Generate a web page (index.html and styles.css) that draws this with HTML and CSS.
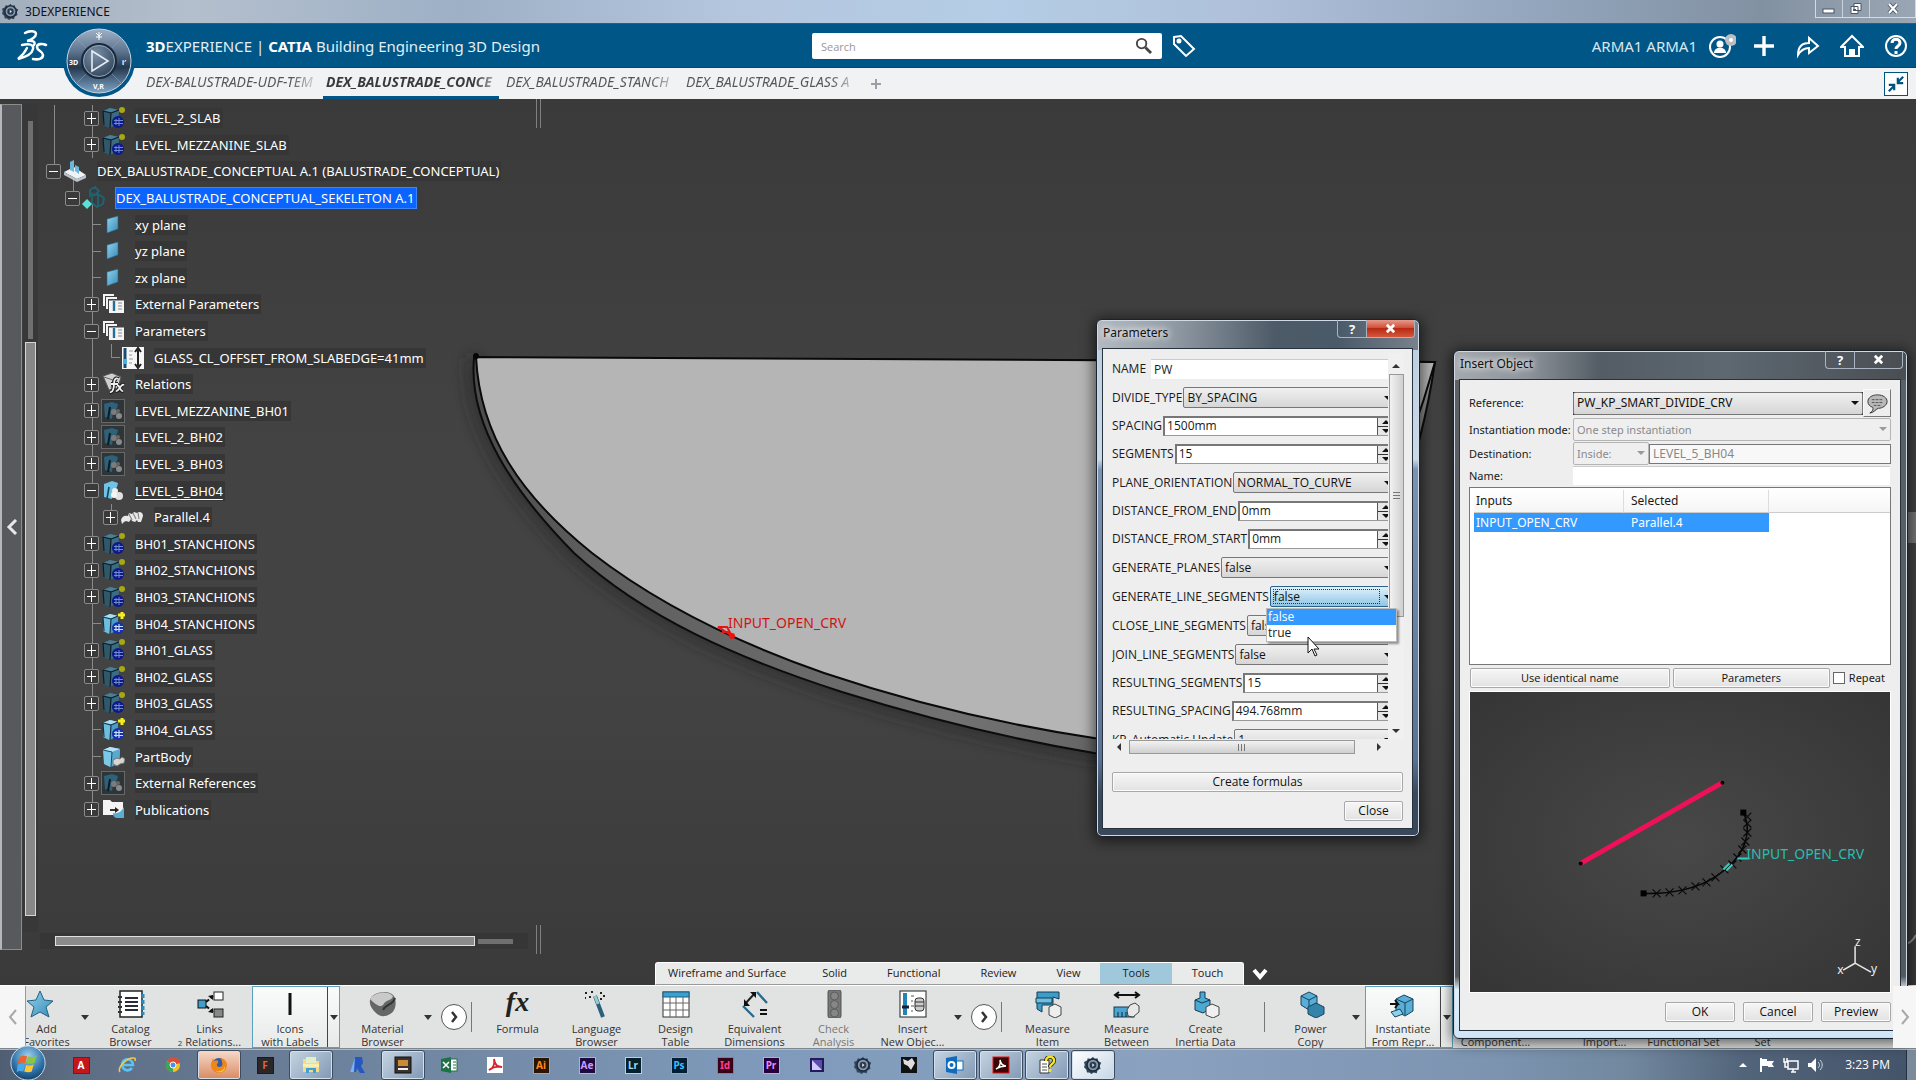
FILE: index.html
```html
<!DOCTYPE html>
<html lang="en">
<head>
<meta charset="utf-8">
<title>3DEXPERIENCE</title>
<link rel="stylesheet" href="styles.css">
</head>
<body>
<svg class="defs" aria-hidden="true">
  <defs>
    <linearGradient id="gSlabSide" x1="0" y1="0" x2="1" y2="0"><stop offset="0" stop-color="#4a4a4a"/><stop offset=".12" stop-color="#5e5e5e"/><stop offset=".5" stop-color="#727272"/><stop offset=".64" stop-color="#666"/><stop offset="1" stop-color="#8a8a8a"/></linearGradient>
    <linearGradient id="gBlue" x1="0" y1="0" x2="1" y2="1"><stop offset="0" stop-color="#8fd3f0"/><stop offset="1" stop-color="#3a8bb5"/></linearGradient>
    <linearGradient id="gRing" x1="0" y1="0" x2="0" y2="1"><stop offset="0" stop-color="#9fb0c4"/><stop offset=".35" stop-color="#5d7590"/><stop offset=".6" stop-color="#24384f"/><stop offset="1" stop-color="#7fa6c8"/></linearGradient>
    <radialGradient id="gHub" cx=".4" cy=".3" r=".9"><stop offset="0" stop-color="#7a90a8"/><stop offset="1" stop-color="#1f3045"/></radialGradient>
    <radialGradient id="gOrb" cx=".5" cy=".3" r=".8"><stop offset="0" stop-color="#9fd0ee"/><stop offset=".6" stop-color="#2a6ea5"/><stop offset="1" stop-color="#0c2c50"/></radialGradient>
  </defs>
  <symbol id="i-body" viewBox="0 0 24 24">
    <path d="M2 5 9 2l8 2-1 14-8 4-6-3z" fill="#6cbde0"/><path d="M2 5 9 2l8 2-7 3z" fill="#a8def5"/><path d="M10 7l7-3-1 14-7 4z" fill="#4a9cc4"/>
    <path d="M2 5l8 2-1 15M10 7l7-3M2 5l1 14" fill="none" stroke="#123448" stroke-width="1.2"/>
    <circle cx="17" cy="16" r="6" fill="#1a2fae"/><path d="M15 13v6M18 12v8M13 14.500h9M13 17.500h9" stroke="#bfe0ff" stroke-width="1.200"/><path d="M21 0v7M17 3h7" stroke="#f5ec22" stroke-width="3"/>
  </symbol>
  <symbol id="i-body-dim" viewBox="0 0 24 24">
    <path d="M2 5 9 2l9 2-1 14-9 4-6-3z" fill="#30586b"/><path d="M2 5 9 2l9 2-8 3z" fill="#4b7f95"/><path d="M10 7l8-3-1 14-8 4z" fill="#3b6c82"/>
    <path d="M2 5l8 2-1 15M10 7l8-3M2 5l1 14" fill="none" stroke="#0c1d27" stroke-width="1.2"/>
    <circle cx="17" cy="16" r="6" fill="#10188a"/><path d="M15 13v6M18 12v8M13 14.500h9M13 17.500h9" stroke="#6b8cd0" stroke-width="1"/><circle cx="21" cy="4" r="3" fill="#a8a714"/>
  </symbol>
  <symbol id="i-partbody" viewBox="0 0 24 24">
    <path d="M2 5 9 2l10 2-1 14-9 4-6-3z" fill="#7cc8e8"/><path d="M2 5 9 2l10 2-8 3z" fill="#b4e4f8"/><path d="M11 7l8-3-1 14-8 4z" fill="#57a9cf"/><path d="M2 5l9 2-1 15" fill="none" stroke="#1d4a60"/>
    <path d="M12 15l4-2 3 1 2-2 3 2-1 4-4 1-3 2-4-2z" fill="#d9d6d2" stroke="#777"/>
  </symbol>
  <symbol id="i-plane" viewBox="0 0 24 24"><path d="M6 6 17 3v13L6 20z" fill="url(#gBlue)" stroke="#25617f" stroke-width=".6"/></symbol>
  <symbol id="i-params" viewBox="0 0 24 24">
    <path d="M2 2h11v2H4v10H2zM5 5h11v2H7v10H5z" fill="#f4f4f4"/><path d="M8 8h15v13H8z" fill="#f4f4f4"/><path d="M13 9v10" stroke="#1f6f9f" stroke-width="2.4"/><path d="M17 11h4M17 14h4M17 17h4" stroke="#888"/><path d="M8 8h15" stroke="#444"/>
  </symbol>
  <symbol id="i-param" viewBox="0 0 24 24"><rect x="2" y="1" width="22" height="22" fill="#f7f7f7"/><path d="M5 2v20" stroke="#1b4d73" stroke-width="3"/><path d="M5 13v5" stroke="#49b3e0" stroke-width="4"/><path d="M9 5h4M9 9h3M9 13h4M9 17h3" stroke="#999"/><path d="M18 4v16M15 6l3-4 3 4M15 18l3 4 3-4" fill="none" stroke="#222" stroke-width="2"/></symbol>
  <symbol id="i-rel" viewBox="0 0 24 24"><path d="M2 4l9-3 9 4-3 11-9 2z" fill="#cfcfcf" stroke="#555"/><path d="M3 5l9 3 7-3M12 8l-2 8" stroke="#666" fill="none"/><path d="M17 7c-3-2-4 2-4 5s-1 9-4 8M10 12h7M15 19c3 1 5-8 8-6M16 13c3 0 3 7 6 6" fill="none" stroke="#222" stroke-width="4"/><path d="M17 7c-3-2-4 2-4 5s-1 9-4 8M10 12h7M15 19c3 1 5-8 8-6M16 13c3 0 3 7 6 6" fill="none" stroke="#eee" stroke-width="1.800"/></symbol>
  <symbol id="i-set-dim" viewBox="0 0 24 24"><rect x=".5" y=".5" width="23" height="23" fill="#2e3539" stroke="#686868"/><path d="M3 5l8-2 6 2-1 4-4 4-1 7-7-2z" fill="#2f6178"/><path d="M9 8l-2 12" stroke="#101a20" stroke-width="2"/><circle cx="13" cy="13" r="3" fill="#7c7c7c"/><circle cx="18" cy="17" r="3" fill="#8a8a8a"/><circle cx="17" cy="12" r="2" fill="#666"/></symbol>
  <symbol id="i-set" viewBox="0 0 24 24"><path d="M3 5l8-3 6 2-1 4-4 4-1 8-8-2z" fill="#6fc4e6"/><path d="M8 8L6 20" stroke="#1a4459" stroke-width="1.6"/><circle cx="14" cy="12" r="3" fill="#eee"/><circle cx="18" cy="17" r="4" fill="#e2e2e2"/><circle cx="13" cy="16" r="3" fill="#f5f5f5"/></symbol>
  <symbol id="i-parallel" viewBox="0 0 24 24"><path d="M1 15c1-4 4-5 7-4l1-3 3 1 2-2 3 1 2-1c3 0 4 2 4 4l-2 6-3 0-1-2-2 2-3-1-1-2-2 3-3-1-2 1-2 2z" fill="#e8e8e8"/><path d="M9 9l3 6M13 8l3 6M18 8l1 6" stroke="#888" stroke-width="1.2"/></symbol>
  <symbol id="i-pub" viewBox="0 0 24 24"><path d="M2 2h7l2 2h11v13H2z" fill="#f4f4f4"/><path d="M9 12h7" stroke="#333" stroke-width="2"/><path d="M23 9v11h-7c-3 0-4-3-4-5 5 1 8-1 11-6z" fill="#5aaed4"/><path d="M14 9l4 3-4 3" fill="#222"/></symbol>
  <symbol id="i-product" viewBox="0 0 24 24"><path d="M1 13l13 7 9-4-12-8z" fill="#eef3f6"/><path d="M1 13v3l13 7v-3zM14 20v3l9-4v-3z" fill="#b8c2c8"/><path d="M7 3l4-2v12l-4-2zM12 6l4 2v7l-4-3z" fill="#6ab8dc"/></symbol>
  <symbol id="i-skel" viewBox="0 0 24 24"><g fill="none" stroke="#1f6474" stroke-width="1.8"><path d="M8 4l5-3 4 4-4 4-5-2zM10 10l6-2 6 4-1 6-6 3-5-4z"/><path d="M8 4v7M16 8v12"/></g><path d="M0 18l5-5 5 5-5 5z" fill="#5ce0d8"/></symbol>
  <symbol id="i-compass" viewBox="0 0 24 24"><path d="M12 1l2 3 4-1 1 4 4 2-2 4 1 4-4 2-1 4-4-1-3 2-3-2-3 0-1-4-3-3 1-3-1-4 4-2 1-3 4 1z" fill="#33455a"/><circle cx="12" cy="12" r="8" fill="#8598ac" stroke="#1c2937" stroke-width="2"/><circle cx="12" cy="12" r="4.500" fill="#2b3c50"/><path d="M11 9.500l3 2.500-3 2.500z" fill="#dbe6f0"/></symbol>
</svg>

<div class="titlebar">
  <svg class="app-icon"><use href="#i-compass"/></svg>
  <span class="title">3DEXPERIENCE</span>
  <div class="win-controls">
    <button aria-label="Minimize"><svg viewBox="0 0 14 14"><rect x="1" y="7" width="11" height="4" fill="#fff" stroke="#4a5665"/></svg></button>
    <button aria-label="Restore"><svg viewBox="0 0 14 14"><path d="M5 1.500h7v7H5z M2 4.500h7v7H2z" fill="#fff" stroke="#4a5665"/><rect x="4" y="7" width="3" height="2" fill="#4a5665"/></svg></button>
    <button class="wide" aria-label="Close window"><svg viewBox="0 0 14 14"><path d="M3 2l8 9M11 2l-8 9" stroke="#4a5665" stroke-width="4"/><path d="M3 2l8 9M11 2l-8 9" stroke="#fff" stroke-width="2.200"/></svg></button>
  </div>
</div>

<header class="topbar">
  <div class="brand">
    <svg class="logo" viewBox="0 0 32 32" fill="none" stroke="#fff" stroke-linecap="round"><path d="M9 3c5-3 11-2 11 1 0 3-5 6-9 7 6-1 9 1 7 4" stroke-width="2.400"/><path d="M6 15c8-2 12 0 11 4-1 5-7 8-15 10 4-3 7-7 9-11" stroke-width="2.400"/><path d="M30 15c-4-2-9-1-9 2 0 4 6 4 6 8 0 4-5 5-10 4" stroke-width="2.600"/></svg>
    <h1><b>3D</b>EXPERIENCE | <b>CATIA</b> Building Engineering 3D Design</h1>
  </div>
  <div class="search"><input type="text" placeholder="Search" aria-label="Search"><button aria-label="Run search"><svg viewBox="0 0 18 18" fill="none" stroke="#444"><circle cx="7" cy="7" r="5" stroke-width="2"/><path d="M11 11l6 6" stroke-width="3"/></svg></button></div>
  <div class="top-right">
    <button class="tag" aria-label="Tags"><svg viewBox="0 0 24 24" fill="none" stroke="#fff" stroke-width="2"><path d="M2 3l7-1 13 13-8 7L2 10z"/><circle cx="7" cy="7" r="1.500" fill="#fff"/></svg></button>
    <span class="user">ARMA1 ARMA1</span>
    <button aria-label="Profile"><svg viewBox="0 0 28 24"><circle cx="12" cy="13" r="10" fill="none" stroke="#fff" stroke-width="2"/><circle cx="12" cy="10" r="3.500" fill="#fff"/><path d="M6 19c0-7 12-7 12 0z" fill="#fff"/><circle cx="23" cy="6" r="6" fill="#b9bec6"/><circle cx="23" cy="6" r="2" fill="#fff"/></svg></button>
    <button aria-label="Add"><svg viewBox="0 0 24 24"><path d="M12 2v20M2 12h20" stroke="#fff" stroke-width="3.400"/></svg></button>
    <button aria-label="Share"><svg viewBox="0 0 24 24" fill="none" stroke="#fff" stroke-width="2"><path d="M2 21c0-8 3-12 11-12V4l9 8-9 7v-5c-5 0-8 2-11 7z"/></svg></button>
    <button aria-label="Home"><svg viewBox="0 0 24 24" fill="none" stroke="#fff" stroke-width="2"><path d="M1 13L12 2l11 11h-4v9H5v-9z"/><rect x="9" y="15" width="6" height="7" fill="#fff" stroke="none"/></svg></button>
    <button aria-label="Help"><svg viewBox="0 0 24 24" fill="none" stroke="#fff" stroke-width="2"><circle cx="12" cy="12" r="10"/><path d="M8 9c0-5 8-5 8 0 0 3-4 3-4 6" stroke-width="3"/><path d="M12 17v3" stroke-width="3"/></svg></button>
  </div>
  <svg class="compass" viewBox="0 0 74 74">
    <circle cx="37" cy="37" r="36" fill="#005686"/><circle cx="37" cy="37" r="32" fill="url(#gRing)" stroke="#c5d3e0" stroke-width="1"/>
    <path d="M14 14l10 10M60 14L50 24M14 60l10-10M60 60L50 50" stroke="#8ba0b6" stroke-width="1" opacity=".6"/>
    <circle cx="37" cy="37" r="17" fill="url(#gHub)" stroke="#1a2a3c" stroke-width="2"/><circle cx="37" cy="37" r="15.500" fill="none" stroke="#8fa5bb"/>
    <path d="M30 27l16 10-16 10z" fill="none" stroke="#e6eef5" stroke-width="1.600"/>
    <path d="M34 9l3 3 3-3M37 8v8M34 13h6" stroke="#fff" fill="none"/>
    <text x="7" y="41">3D</text><text x="60" y="41">i&#8242;</text><text x="31" y="65">V,R</text>
  </svg>
</header>

<nav class="doc-tabs">
  <a href="#">DEX-BALUSTRADE-UDF-TEM</a>
  <a href="#" class="active">DEX_BALUSTRADE_CONCE</a>
  <a href="#">DEX_BALUSTRADE_STANCH</a>
  <a href="#">DEX_BALUSTRADE_GLASS A</a>
  <button class="new-tab" aria-label="New tab"><svg viewBox="0 0 12 12"><path d="M6 1v10M1 6h10" stroke="#9aa0a5" stroke-width="2"/></svg></button>
  <button class="shrink" aria-label="Exit full screen"><svg viewBox="0 0 20 20" stroke="#00527f" stroke-width="2.400" fill="none"><path d="M18 2l-6 6M12 3v6h6M2 18l6-6M8 17v-6H2"/></svg></button>
</nav>

<main class="viewport">
  <svg class="scene" viewBox="0 99 1916 886" preserveAspectRatio="xMinYMin slice">
    <filter id="soft" x="-10%" y="-10%" width="120%" height="120%"><feGaussianBlur stdDeviation="8"/></filter>
    <path d="M474 358C468 425 514 492 574 553 645 618 737 658 842 692 925 718 1010 739 1094 753L1250 765" fill="none" stroke="#282828" stroke-width="9" filter="url(#soft)"/>
    <path d="M474 358C468 425 514 492 574 553 645 618 737 658 842 692 925 718 1010 739 1094 753 1260 770 1400 600 1435 362z" fill="url(#gSlabSide)" stroke="#0c0c0c" stroke-width="2"/>
    <path d="M476 357C480 436 521 496 592 553 655 602 735 642 824 673 910 702 1000 724 1094 738 1260 750 1380 560 1435 362z" fill="#b5b5b5" stroke="#0a0a0a" stroke-width="2"/>
    <circle cx="476" cy="356" r="3" fill="#050505"/>
    <path d="M718 627h9l5 9-12-8zM722 632h8" fill="none" stroke="#e81414" stroke-width="2"/><circle cx="732" cy="636" r="3" fill="#f01010"/>
    <text x="728" y="628" class="crv-label">INPUT_OPEN_CRV</text>
    <path d="M536.500 99v29M540.500 99v29M536.500 925v29M540.500 925v29" stroke="#808080"/>
    <path d="M1905 512h11v31h-11z" fill="#777"/><path d="M1903 945c6-1 10-4 13-10" stroke="#8c8c8c" stroke-width="2" fill="none"/>
  </svg>
  <div class="side-panel"><button aria-label="Collapse panel"><svg viewBox="0 0 12 16"><path d="M10 1L3 8l7 7" fill="none" stroke="#e8e8e8" stroke-width="3"/></svg></button></div>
  <div class="v-scroll"><i class="rail"></i><i class="thumb"></i></div>
  <ul class="tree">
    <li class="l3 root"><span class="box plus"></span><svg><use href="#i-body-dim"/></svg><span class="name">LEVEL_2_SLAB</span></li>
    <li class="l3 root"><span class="box plus"></span><svg><use href="#i-body-dim"/></svg><span class="name">LEVEL_MEZZANINE_SLAB</span></li>
    <li class="l1"><span class="box"></span><svg><use href="#i-product"/></svg><span class="name">DEX_BALUSTRADE_CONCEPTUAL A.1 (BALUSTRADE_CONCEPTUAL)</span></li>
    <li class="l2"><span class="box"></span><svg><use href="#i-skel"/></svg><span class="name selected">DEX_BALUSTRADE_CONCEPTUAL_SEKELETON A.1</span></li>
    <li class="l3"><span class="leaf"></span><svg><use href="#i-plane"/></svg><span class="name">xy plane</span></li>
    <li class="l3"><span class="leaf"></span><svg><use href="#i-plane"/></svg><span class="name">yz plane</span></li>
    <li class="l3"><span class="leaf"></span><svg><use href="#i-plane"/></svg><span class="name">zx plane</span></li>
    <li class="l3"><span class="box plus"></span><svg><use href="#i-params"/></svg><span class="name">External Parameters</span></li>
    <li class="l3"><span class="box"></span><svg><use href="#i-params"/></svg><span class="name">Parameters</span></li>
    <li class="l4"><span class="leaf"></span><svg><use href="#i-param"/></svg><span class="name">GLASS_CL_OFFSET_FROM_SLABEDGE=41mm</span></li>
    <li class="l3"><span class="box plus"></span><svg><use href="#i-rel"/></svg><span class="name">Relations</span></li>
    <li class="l3"><span class="box plus"></span><svg><use href="#i-set-dim"/></svg><span class="name">LEVEL_MEZZANINE_BH01</span></li>
    <li class="l3"><span class="box plus"></span><svg><use href="#i-set-dim"/></svg><span class="name">LEVEL_2_BH02</span></li>
    <li class="l3"><span class="box plus"></span><svg><use href="#i-set-dim"/></svg><span class="name">LEVEL_3_BH03</span></li>
    <li class="l3"><span class="box"></span><svg><use href="#i-set"/></svg><span class="name current">LEVEL_5_BH04</span></li>
    <li class="l4"><span class="box plus"></span><svg><use href="#i-parallel"/></svg><span class="name">Parallel.4</span></li>
    <li class="l3"><span class="box plus"></span><svg><use href="#i-body-dim"/></svg><span class="name">BH01_STANCHIONS</span></li>
    <li class="l3"><span class="box plus"></span><svg><use href="#i-body-dim"/></svg><span class="name">BH02_STANCHIONS</span></li>
    <li class="l3"><span class="box plus"></span><svg><use href="#i-body-dim"/></svg><span class="name">BH03_STANCHIONS</span></li>
    <li class="l3"><span class="leaf"></span><svg><use href="#i-body"/></svg><span class="name">BH04_STANCHIONS</span></li>
    <li class="l3"><span class="box plus"></span><svg><use href="#i-body-dim"/></svg><span class="name">BH01_GLASS</span></li>
    <li class="l3"><span class="box plus"></span><svg><use href="#i-body-dim"/></svg><span class="name">BH02_GLASS</span></li>
    <li class="l3"><span class="box plus"></span><svg><use href="#i-body-dim"/></svg><span class="name">BH03_GLASS</span></li>
    <li class="l3"><span class="leaf"></span><svg><use href="#i-body"/></svg><span class="name">BH04_GLASS</span></li>
    <li class="l3"><span class="leaf"></span><svg><use href="#i-partbody"/></svg><span class="name">PartBody</span></li>
    <li class="l3"><span class="box plus"></span><svg><use href="#i-set-dim"/></svg><span class="name">External References</span></li>
    <li class="l3 last"><span class="box plus"></span><svg><use href="#i-pub"/></svg><span class="name">Publications</span></li>
  </ul>
  <div class="h-scroll"><i class="thumb"></i><i class="rail"></i></div>
  <nav class="ribbon-tabs">
    <div class="tab-strip">
      <button>Wireframe and Surface</button><button>Solid</button><button>Functional</button><button>Review</button><button>View</button><button class="on">Tools</button><button>Touch</button>
    </div>
    <button class="more" aria-label="More tabs"><svg viewBox="0 0 16 12"><path d="M2 2l6 7 6-7" fill="none" stroke="#fff" stroke-width="4"/></svg></button>
  </nav>
</main>

<section class="ribbon">
  <button class="edge left" aria-label="Scroll left"><svg viewBox="0 0 12 18"><path d="M9 2L3 9l6 7" fill="none" stroke="#a5a9ac" stroke-width="2"/></svg></button>
  <button class="item first"><svg viewBox="0 0 28 28"><path d="M14 1l4 9 9 1-7 6 3 10-9-5-9 5 3-10-7-6 9-1z" fill="url(#gBlue)" stroke="#22617f"/></svg><span>Add<br>Favorites</span></button>
  <button class="drop" aria-label="More favorites"></button>
  <button class="item"><svg viewBox="0 0 28 28"><rect x="3" y="1" width="22" height="26" fill="#fff" stroke="#222" stroke-width="1.500"/><path d="M8 8h13M8 12h13M8 16h13M8 20h13" stroke="#2b2b3a" stroke-width="2"/><path d="M1 7h4M1 12h4M1 17h4M1 22h4" stroke="#333" stroke-width="2"/><path d="M26 4v4M26 10v4M26 16v4M26 22v3" stroke="#2b8bc0" stroke-width="3"/></svg><span>Catalog<br>Browser</span></button>
  <button class="item"><svg viewBox="0 0 28 28"><rect x="2" y="10" width="8" height="8" fill="#3f9ecb" stroke="#111"/><rect x="18" y="2" width="9" height="8" fill="#fff" stroke="#222"/><rect x="18" y="19" width="9" height="8" fill="#888" stroke="#222"/><path d="M10 12l7-6M10 16l7 6" stroke="#111" stroke-width="2" stroke-dasharray="4 2"/><path d="M17 5v5l-5-4zM17 23v-5l-5 4z" fill="#111"/></svg><span>Links<br><small>2</small> Relations...</span></button>
  <span class="split"><button class="item"><svg viewBox="0 0 28 28"><path d="M14 3v22" stroke="#111" stroke-width="3"/></svg><span>Icons<br>with Labels</span></button><button class="drop" aria-label="Label options"></button></span>
  <button class="item"><svg viewBox="0 0 28 28"><path d="M1 10C3 2 20-1 25 6c3 6 2 15-4 18-6 4-11 2-14-1-4-4-7-8-6-13z" fill="#666"/><path d="M1 9C5 2 19 0 24 6c-1 5-7 3-10 9-3 3-8-1-13-6z" fill="#c9c9c9"/><path d="M26 8c-2 7-9 6-12 12" stroke="#333" stroke-width="2" fill="none"/></svg><span>Material<br>Browser</span></button>
  <button class="drop" aria-label="More materials"></button>
  <button class="round" aria-label="Next group"><svg viewBox="0 0 12 12"><path d="M4 1l4 5-4 5" fill="none" stroke="#333" stroke-width="2.500"/></svg></button><i class="sep"></i>
  <button class="item"><em class="fx">fx</em><span>Formula</span></button>
  <button class="item"><svg viewBox="0 0 28 28"><path d="M12 6l8 21" stroke="#2c5f7c" stroke-width="4"/><path d="M12 6l3 8" stroke="#9cc" stroke-width="3"/><path d="M2 3h2M6 7h2M2 8h1M17 3h2M20 6h2M8 2h2M17 9h2" stroke="#222" stroke-width="2"/></svg><span>Language<br>Browser</span></button>
  <button class="item"><svg viewBox="0 0 28 28"><rect x="1" y="2" width="26" height="25" fill="#fff" stroke="#333"/><rect x="1" y="2" width="26" height="5" fill="#3b9fcf" stroke="#1c5f80"/><path d="M1 13h26M1 20h26M8 7v20M14 7v20M21 7v20" stroke="#666"/></svg><span>Design<br>Table</span></button>
  <button class="item"><svg viewBox="0 0 28 28"><path d="M4 14L14 3" stroke="#222" stroke-width="2"/><path d="M16 2l10 11M2 16l11 11" stroke="#2a6a8b" stroke-width="2.400"/><path d="M3 9v7h6zM9 2h6v6z" fill="#111"/><path d="M19 20h7M19 24h7" stroke="#111" stroke-width="2"/></svg><span>Equivalent<br>Dimensions</span></button>
  <button class="item off"><svg viewBox="0 0 28 28"><rect x="8" y="0" width="13" height="28" rx="2" fill="#777" stroke="#555"/><circle cx="14.500" cy="6" r="4" fill="#868686" stroke="#5c5c5c"/><circle cx="14.500" cy="14.500" r="4" fill="#868686" stroke="#5c5c5c"/><circle cx="14.500" cy="23" r="4" fill="#868686" stroke="#5c5c5c"/></svg><span>Check<br>Analysis</span></button>
  <button class="item"><svg viewBox="0 0 28 28"><rect x="1" y="1" width="26" height="26" fill="#fff" stroke="#222"/><path d="M6 3v22" stroke="#2384b8" stroke-width="4"/><path d="M3 17h7" stroke="#123" stroke-width="3"/><path d="M12 6h3M12 11h2M12 16h3M12 21h2" stroke="#555"/><rect x="16" y="8" width="9" height="13" rx="3" fill="#ccc" stroke="#333"/><path d="M16 12h9M16 16h9" stroke="#333"/></svg><span>Insert<br>New Objec...</span></button>
  <button class="drop" aria-label="More objects"></button>
  <button class="round" aria-label="Next group"><svg viewBox="0 0 12 12"><path d="M4 1l4 5-4 5" fill="none" stroke="#333" stroke-width="2.500"/></svg></button><i class="sep"></i>
  <button class="item"><svg viewBox="0 0 28 28"><path d="M3 2h22v7l-6-2v8H8v7l-5-3z" fill="#3d9cc8" stroke="#143c50"/><path d="M2 8h16v5H2z" fill="#6ac0e4" stroke="#143c50"/><path d="M15 17l6-3 6 3v8l-6 3-6-3z" fill="#eee" stroke="#444"/></svg><span>Measure<br>Item</span></button>
  <button class="item"><svg viewBox="0 0 28 28"><path d="M3 5h22M6 2L2 5l4 3M22 2l4 3-4 3" fill="none" stroke="#111" stroke-width="2"/><rect x="1" y="17" width="20" height="10" fill="#4aa6d0" stroke="#16394d"/><path d="M5 27v-5M9 27v-5M13 27v-5" stroke="#123"/><path d="M14 20l3-5 5-2 4 3v6l-6 5-5-1z" fill="#e8e8e8" stroke="#444"/></svg><span>Measure<br>Between</span></button>
  <button class="item"><svg viewBox="0 0 28 28"><path d="M8 2h5v6l5 2v9l-7 4-8-3V10l5-2z" fill="#4ba9d4" stroke="#16394d"/><path d="M3 10l7 3 8-3" fill="none" stroke="#16394d"/><path d="M14 17l6-3 7 3v8l-6 3-7-3z" fill="#f0f0f0" stroke="#444"/></svg><span>Create<br>Inertia Data</span></button>
  <i class="sep lone"></i>
  <button class="item"><svg viewBox="0 0 28 28"><path d="M4 6l8-4 8 4v9l-8 5-8-5z" fill="#58aed6" stroke="#17435a"/><path d="M4 6l8 4 8-4M12 10v9" fill="none" stroke="#17435a"/><path d="M11 17l8-4 8 4v7l-8 4-8-4z" fill="#3583aa" stroke="#17435a"/></svg><span>Power<br>Copy</span></button>
  <button class="drop" aria-label="More copies"></button>
  <span class="split"><button class="item"><svg viewBox="0 0 28 28"><path d="M7 9l8-4 9 4v12l-8 5-9-5z" fill="#58aed6" stroke="#17435a"/><path d="M7 9l9 4 8-4M16 13v12" fill="none" stroke="#17435a"/><path d="M1 14h8l-3-4M9 14l-3 4" stroke="#111" fill="none" stroke-width="2"/><path d="M2 22l9-3 3 5-8 3z" fill="#8dd0ee" stroke="#17435a"/></svg><span>Instantiate<br>From Repr...</span></button><button class="drop" aria-label="More instantiations"></button></span>
  <button class="item under"><span>Component...</span></button>
  <button class="item under gap"><span>Import...</span></button>
  <button class="item under"><span>Functional Set</span></button>
  <button class="item under"><span>Set</span></button>
  <button class="edge right" aria-label="Scroll right"><svg viewBox="0 0 12 18"><path d="M3 2l6 7-6 7" fill="none" stroke="#a5a9ac" stroke-width="2"/></svg></button>
</section>

<footer class="taskbar">
  <button class="start" aria-label="Start"><svg viewBox="0 0 40 40"><circle cx="20" cy="20" r="18" fill="url(#gOrb)" stroke="#cfe0ee"/><path d="M11 14c3-2 5-2 8-1l-2 7c-3-1-5-1-8 1z" fill="#f0622a"/><path d="M20 13c3 1 6 1 9-1l-2 8c-3 1-6 1-9 0z" fill="#8cc63f"/><path d="M9 22c3-2 5-1 8 0l-2 7c-3-1-5-1-7 1z" fill="#4aa8e8"/><path d="M18 22c3 1 6 1 8-1l-2 8c-2 1-5 1-8 0z" fill="#fdc82f"/></svg></button>
  <button class="app" aria-label="AutoCAD"><b class="sq red">A</b></button>
  <button class="app" aria-label="Internet Explorer"><svg viewBox="0 0 18 18" fill="none"><path d="M14 12a5.500 5.500 0 1 1 1-3H5" stroke="#5cc3f5" stroke-width="2.600"/><path d="M2 16C-1 12 9 1 16 2c2 0 1 2 1 3" stroke="#f2c94c" stroke-width="1.500"/></svg></button>
  <button class="app" aria-label="Chrome"><svg viewBox="0 0 18 18"><circle cx="9" cy="9" r="7" fill="#f2c12e"/><path d="M9 9L3 5a7 7 0 0 1 13 2z" fill="#dd4b39"/><path d="M9 9v7A7 7 0 0 1 3 5z" fill="#3ba455"/><circle cx="9" cy="9" r="3" fill="#4b8df0" stroke="#fff"/></svg></button>
  <button class="app open hot" aria-label="Firefox"><svg viewBox="0 0 18 18"><circle cx="9" cy="9" r="7" fill="#2a5fae"/><path d="M9 17A8 8 0 0 1 2 5l1-3 1 3c3-2 5 0 4 2-2 1-1 4 1 4 3 0 4-2 3-5 0-2-1-3-2-4 5 1 7 4 7 7a8 8 0 0 1-8 8z" fill="#f08518"/><path d="M5 14c3 3 9 1 10-4 1 5-6 9-10 4z" fill="#fbd043"/></svg></button>
  <button class="app" aria-label="Fusion"><b class="sq dark">F</b></button>
  <button class="app open" aria-label="Explorer"><svg viewBox="0 0 18 18"><path d="M1 3h6l2 2h8v11H1z" fill="#f3dd84"/><path d="M4 1h10v6H4z" fill="#dff0c8"/><path d="M1 8h16v3H1z" fill="#fbeeb0"/><path d="M4 17v-5h10v5h-3v-3H7v3z" fill="#3f9fd8"/></svg></button>
  <button class="app" aria-label="Revit"><svg viewBox="0 0 18 18"><path d="M2 16L7 1h7l1 6-2 3 4 7h-5l-3-5-1 4z" fill="#2458c0"/><path d="M7 1l-5 15h4z" fill="#7fb0f0"/></svg></button>
  <button class="app open" aria-label="Sublime"><svg viewBox="0 0 18 18"><rect x="1" y="1" width="16" height="16" fill="#3b332b" stroke="#111"/><path d="M4 4h10v6H4z" fill="#c98a3a"/><path d="M4 13h10" stroke="#eee" stroke-width="2"/></svg></button>
  <button class="app" aria-label="Excel"><svg viewBox="0 0 18 18"><rect x="8" y="3" width="9" height="12" fill="#fff" stroke="#1e7145"/><path d="M1 3l10-2v16L1 15z" fill="#1e7145"/><path d="M3 6l6 6M9 6l-6 6" stroke="#fff" stroke-width="1.600"/><path d="M13 6h3M13 9h3M13 12h3" stroke="#1e7145"/></svg></button>
  <button class="app" aria-label="Acrobat"><svg viewBox="0 0 18 18"><rect x="1" y="1" width="16" height="16" fill="#fff"/><path d="M3 14c4-1 6-6 5-11 1 6 3 8 8 8-5-1-9 0-13 3z" fill="none" stroke="#d8232a" stroke-width="1.800"/></svg></button>
  <button class="app" aria-label="Illustrator"><b class="sq ai">Ai</b></button>
  <button class="app" aria-label="After Effects"><b class="sq ae">Ae</b></button>
  <button class="app" aria-label="Lightroom"><b class="sq lr">Lr</b></button>
  <button class="app" aria-label="Photoshop"><b class="sq ps">Ps</b></button>
  <button class="app" aria-label="InDesign"><b class="sq id">Id</b></button>
  <button class="app" aria-label="Premiere"><b class="sq pr">Pr</b></button>
  <button class="app" aria-label="Media Encoder"><svg viewBox="0 0 18 18"><rect x="2" y="2" width="14" height="14" fill="#241a56"/><path d="M4 4l10 10V4z" fill="#5a4cae"/><path d="M4 4l10 10H4z" fill="#cfc8ff"/></svg></button>
  <button class="app" aria-label="3DEXPERIENCE launcher"><svg><use href="#i-compass"/></svg></button>
  <button class="app" aria-label="Rhinoceros"><svg viewBox="0 0 18 18"><rect x="1" y="1" width="16" height="16" fill="#111"/><path d="M3 3l5 2 4-3 3 5-4 7-3-4-4-2z" fill="#ddd"/></svg></button>
  <button class="app open" aria-label="Outlook"><svg viewBox="0 0 18 18"><rect x="9" y="5" width="8" height="9" fill="#fff" stroke="#0f6cbd"/><path d="M0 2l11-2v18L0 16z" fill="#0f6cbd"/><circle cx="5.500" cy="9" r="3" fill="none" stroke="#fff" stroke-width="2"/></svg></button>
  <button class="app open" aria-label="Acrobat DC"><svg viewBox="0 0 18 18"><rect x="1" y="1" width="16" height="16" fill="#3b0606" stroke="#e11"/><path d="M4 13c3-1 5-5 4-9 1 5 3 6 6 6-4 0-7 1-10 3z" fill="none" stroke="#fff" stroke-width="1.500"/></svg></button>
  <button class="app open" aria-label="Help"><svg viewBox="0 0 18 18"><path d="M2 4h9v13H2z" fill="#fff" stroke="#333"/><path d="M4 8h5M4 11h5M4 14h5" stroke="#555"/><path d="M8 5c0-6 9-5 8 0 0 3-4 3-4 6" stroke="#111" stroke-width="4" fill="none"/><path d="M8 5c0-6 9-5 8 0 0 3-4 3-4 6M12 13v3" stroke="#f6e71d" stroke-width="2.500" fill="none"/></svg></button>
  <button class="app open lit" aria-label="3DEXPERIENCE"><svg><use href="#i-compass"/></svg></button>
  <div class="tray">
    <svg viewBox="0 0 16 16"><path d="M4 10l4-4 4 4z" fill="#fff"/></svg>
    <svg viewBox="0 0 16 16"><path d="M2 1v14" stroke="#fff" stroke-width="2"/><path d="M3 2h5v2h7l-2 3 2 3H9V9H3z" fill="#fff"/></svg>
    <svg viewBox="0 0 16 16"><path d="M5 4h10v8H5zM8 15h5M10 12v3M1 1v4h3V1M2 5v5h3" fill="none" stroke="#fff" stroke-width="1.500"/></svg>
    <svg viewBox="0 0 16 16"><path d="M1 6h3l5-5v14L4 10H1z" fill="#fff"/><path d="M11 5c2 2 2 4 0 6M13 3c3 3 3 7 0 10" fill="none" stroke="#cdd8e2"/></svg>
    <time>3:23 PM</time>
    <i class="peek"></i>
  </div>
</footer>

<section class="dialog params" aria-label="Parameters">
  <div class="dlg-title"><span>Parameters</span><div class="dlg-btns"><button aria-label="Dialog help">?</button><button class="close" aria-label="Close dialog"><svg viewBox="0 0 12 12"><path d="M2 2l8 8M10 2l-8 8" stroke="#fff" stroke-width="3"/></svg></button></div></div>
  <div class="dlg-body">
    <div class="scroll-area">
      <form class="fields">
        <div class="row"><label for="f1">NAME</label><input id="f1" class="flat" type="text" value="PW"></div>
        <div class="row"><label for="f2">DIVIDE_TYPE</label><span class="combo"><select id="f2"><option>BY_SPACING</option></select></span></div>
        <div class="row"><label for="f3">SPACING</label><span class="spin"><input id="f3" type="text" value="1500mm"><i></i></span></div>
        <div class="row"><label for="f4">SEGMENTS</label><span class="spin"><input id="f4" type="text" value="15"><i></i></span></div>
        <div class="row"><label for="f5">PLANE_ORIENTATION</label><span class="combo"><select id="f5"><option>NORMAL_TO_CURVE</option></select></span></div>
        <div class="row"><label for="f6">DISTANCE_FROM_END</label><span class="spin"><input id="f6" type="text" value="0mm"><i></i></span></div>
        <div class="row"><label for="f7">DISTANCE_FROM_START</label><span class="spin"><input id="f7" type="text" value="0mm"><i></i></span></div>
        <div class="row"><label for="f8">GENERATE_PLANES</label><span class="combo"><select id="f8"><option>false</option></select></span></div>
        <div class="row"><label for="f9">GENERATE_LINE_SEGMENTS</label><span class="combo focus"><select id="f9"><option>false</option><option>true</option></select></span></div>
        <div class="row"><label for="f10">CLOSE_LINE_SEGMENTS</label><span class="combo"><select id="f10"><option>false</option></select></span></div>
        <div class="row"><label for="f11">JOIN_LINE_SEGMENTS</label><span class="combo"><select id="f11"><option>false</option></select></span></div>
        <div class="row"><label for="f12">RESULTING_SEGMENTS</label><span class="spin"><input id="f12" type="text" value="15"><i></i></span></div>
        <div class="row"><label for="f13">RESULTING_SPACING</label><span class="spin"><input id="f13" type="text" value="494.768mm"><i></i></span></div>
        <div class="row"><label for="f14">KP_Automatic Update</label><span class="combo"><select id="f14"><option>1</option></select></span></div>
      </form>
      <div class="bar-v"><i class="up"></i><i class="knob"></i><i class="down"></i></div>
      <div class="bar-h"><i class="lt"></i><i class="knob"></i><i class="rt"></i></div>
    </div>
    <button class="btn full">Create formulas</button>
    <button class="btn end">Close</button>
  </div>
  <ul class="options"><li class="hit">false</li><li>true</li></ul>
  <svg class="cursor" viewBox="0 0 13 21"><path d="M1 1v16l4-4 3 7 2-1-3-6h5z" fill="#fff" stroke="#111"/></svg>
</section>

<section class="dialog insert" aria-label="Insert Object">
  <div class="dlg-title"><span>Insert Object</span><div class="dlg-btns"><button aria-label="Dialog help">?</button><button class="close" aria-label="Close dialog"><svg viewBox="0 0 12 12"><path d="M2 2l8 8M10 2l-8 8" stroke="#fff" stroke-width="3"/></svg></button></div></div>
  <div class="dlg-body">
    <div class="form-grid">
      <label for="r1">Reference:</label><div class="line"><span class="combo dark"><select id="r1"><option>PW_KP_SMART_DIVIDE_CRV</option></select></span><button class="note" aria-label="Comment"><svg viewBox="0 0 24 24"><path d="M12 3c6 0 10 3 10 7s-5 7-9 7c-2 0-5 5-9 5 3-2 4-4 3-6-3-1-5-3-5-6 0-4 4-7 10-7z" fill="#b9b9b9" stroke="#333"/><path d="M6 8h11M6 11h12M8 14h8" stroke="#555" stroke-dasharray="3 1"/></svg></button></div>
      <label for="r2">Instantiation mode:</label><span class="combo off"><select id="r2" disabled><option>One step instantiation</option></select></span>
      <label for="r3">Destination:</label><div class="line"><span class="combo off inside"><select id="r3" disabled><option>Inside:</option></select></span><input class="dest" type="text" value="LEVEL_5_BH04" aria-label="Destination" readonly></div>
      <label for="r4">Name:</label><input id="r4" class="flat" type="text">
    </div>
    <div class="table-box">
      <table>
        <thead><tr><th>Inputs</th><th>Selected</th><th></th></tr></thead>
        <tbody><tr><td>INPUT_OPEN_CRV</td><td>Parallel.4</td><td></td></tr></tbody>
      </table>
    </div>
    <div class="line tools"><button class="btn grow4">Use identical name</button><button class="btn grow3">Parameters</button><label class="check"><input type="checkbox">Repeat</label></div>
    <svg class="preview" viewBox="0 0 421 299" preserveAspectRatio="xMidYMid meet">
      <path d="M111 171L253 90" stroke="#ee1158" stroke-width="5"/><circle cx="111" cy="171" r="2"/><circle cx="253" cy="90" r="2"/>
      <path d="M174 201C202 202 228 196 245 185 265 172 277 156 278 138 278 130 277 126 274 120" fill="none" stroke="#050505" stroke-width="1.500"/>
      <path d="M183 197l8 8M191 197l-8 8M196 196l8 8M204 196l-8 8M209 194l8 8M217 194l-8 8M222 190l8 8M230 190l-8 8M233 186l8 8M241 186l-8 8M242 181l8 8M250 181l-8 8M251 173l8 8M259 173l-8 8M259 168l8 8M267 168l-8 8M264 161l8 8M272 161l-8 8M269 153l8 8M277 153l-8 8M272 145l8 8M280 145l-8 8M274 136l8 8M282 136l-8 8M274 127l8 8M282 127l-8 8M274 120l8 8M282 120l-8 8" stroke="#0a0a0a" stroke-width="1.200"/>
      <rect x="171" y="198" width="6" height="6"/><rect x="271" y="117" width="6" height="6"/>
      <path d="M254 177l6-6M257 178l6-6M268 166h12" stroke="#2fd0c4" stroke-width="2"/>
      <text x="277" y="167" class="teal">INPUT_OPEN_CRV</text>
      <path d="M386 254v17l-12 7M386 271l16 9" fill="none" stroke="#e8e8e8" stroke-width="1.500"/>
      <text x="386" y="254">z</text><text x="368" y="282">x</text><text x="402" y="281">y</text>
    </svg>
    <div class="line actions"><button class="btn">OK</button><button class="btn">Cancel</button><button class="btn">Preview</button></div>
  </div>
</section>
</body>
</html>
```
FILE: styles.css
```css
* { box-sizing: border-box; }
html, body { height: 100%; }
body { margin: 0; display: flex; flex-direction: column; position: relative; overflow: hidden; background: #3d3d3d; font-family: "Open Sans", "Noto Sans", sans-serif; font-size: 12px; line-height: 16px; color: #1a1a1a; }
button { font: inherit; color: inherit; border: 0; background: none; padding: 0; margin: 0; display: flex; align-items: center; justify-content: center; }
input, select { font: inherit; color: inherit; margin: 0; min-width: 0; }
ul { list-style: none; margin: 0; padding: 0; }
.defs { position: absolute; width: 0; height: 0; }

/* window title */
.titlebar { flex: none; height: 24px; display: flex; align-items: center; gap: 6px; padding-left: 2px; background: linear-gradient(90deg, #a3aebc 0, #b4bfcd 10%, #9db0c6 24%, #b4c6de 38%, #b5cde6 52%, #aebfd9 66%, #93a6bd 80%, #8291a2 92%, #9aa6b3 100%); border-bottom: 1px solid #3b5870; }
.app-icon { width: 17px; height: 17px; }
.title { font: 12px/20px "Noto Sans", sans-serif; color: #111; }
.win-controls { margin-left: auto; align-self: flex-start; display: flex; height: 18px; width: 101px; border: 1px solid #d4dbe3; border-top: 0; }
.win-controls button { width: 27px; border-right: 1px solid #c9d1da; }
.win-controls .wide { flex: 1; border: 0; }
.win-controls svg { width: 14px; height: 14px; }

/* application header */
.topbar { flex: none; height: 44px; position: relative; display: grid; grid-template-columns: 812fr 350fr 754fr; align-items: center; background: #005686; color: #fff; border-bottom: 1px solid #00476f; }
.brand { display: flex; align-items: center; padding-left: 16px; gap: 98px; }
.logo { width: 32px; height: 32px; flex: none; }
h1 { margin: 0; font: 15px/20px "Noto Sans", sans-serif; white-space: nowrap; color: #e4eef5; }
h1 b { color: #fff; }
.search { display: flex; height: 26px; background: #fff; border-radius: 2px; }
.search input { flex: 1; border: 0; background: none; padding: 2px 9px 0; outline: 0; color: #333; font-size: 11px; }
.search input::placeholder { color: #999; opacity: 1; }
.search button { width: 38px; }
.search svg { width: 17px; height: 17px; }
.top-right { display: flex; align-items: center; gap: 20px; padding: 0 8px 0 10px; }
.top-right svg { width: 24px; height: 24px; display: block; }
.top-right .tag { margin-right: auto; }
.top-right [aria-label="Profile"] { margin-left: -9px; margin-right: -4px; }
.top-right [aria-label="Profile"] svg { width: 28px; }
.user { font: 15px/20px "Noto Sans", sans-serif; color: #d8e8f2; }
.compass { position: absolute; left: 62px; top: 0; width: 74px; height: 74px; z-index: 3; }
.compass text { font: bold 7px "Noto Sans", sans-serif; fill: #fff; }

/* document tabs */
.doc-tabs { flex: none; height: 31px; display: flex; align-items: stretch; gap: 4px; padding: 0 8px 0 143px; background: #f1f2f4; }
.doc-tabs a { width: 176px; padding: 0 3px; white-space: nowrap; text-decoration: none; font: italic 14px/28px "Noto Sans", sans-serif; color: transparent; background: linear-gradient(90deg, #555 84%, #d5d5d5 98%); -webkit-background-clip: text; background-clip: text; }
.doc-tabs a.active { font-family: "Open Sans", sans-serif; font-weight: bold; color: transparent; background: linear-gradient(#005686, #005686) 0 28px / 100% 3px no-repeat, linear-gradient(90deg, #3a3a3a 86%, #bbb 99%); background-clip: border-box, text; -webkit-background-clip: border-box, text; }
.new-tab { width: 20px; margin-left: 3px; }
.new-tab svg { width: 12px; height: 12px; }
.shrink { margin-left: auto; width: 24px; height: 24px; align-self: center; border: 1px solid #00527f; background: #fff; }
.shrink svg { width: 18px; height: 18px; }

/* 3D viewport */
.viewport { flex: 1; min-height: 0; position: relative; background: linear-gradient(#3a3a3a 0, #434343 40%, #434343 65%, #3a3a3a 100%); }
.scene { position: absolute; inset: 0; width: 100%; height: 100%; }
.crv-label { font: 14px "Noto Sans", sans-serif; fill: #d01414; }
.side-panel { position: absolute; left: 0; top: 5px; bottom: 35px; width: 22px; background: #58595c; border: 1px solid #8c8c8c; border-left: 2px solid #b5b8bb; display: flex; align-items: center; justify-content: center; }
.side-panel svg { width: 12px; height: 16px; }
.v-scroll { position: absolute; left: 23px; top: 5px; bottom: 53px; width: 15px; padding: 17px 2px 16px; background: #383838; display: flex; flex-direction: column; align-items: center; gap: 3px; }
.v-scroll .rail { width: 5px; flex: 219; background: #6f6f6f; }
.v-scroll .thumb { width: 11px; flex: 575; background: #888; border: 1px solid #d5d5d5; }
.h-scroll { position: absolute; left: 40px; bottom: 36px; width: 488px; height: 16px; padding: 0 15px; background: #363636; display: flex; align-items: center; gap: 3px; }
.h-scroll .thumb { flex: 420; height: 10px; background: #8b8b8b; border: 1px solid #e0e0e0; }
.h-scroll .rail { flex: 35; height: 5px; background: #6f6f6f; }
.tree { position: relative; width: 540px; height: 100%; padding: 6px 0 162px; display: grid; grid-template-rows: repeat(27, 1fr); font: 13px/20px "Noto Sans", sans-serif; color: #fff; }
.tree li { display: flex; align-items: center; padding-left: 84px; min-height: 0; white-space: nowrap; }
.tree .l1 { padding-left: 46px; background: linear-gradient(#8a8a8a, #8a8a8a) 54px 0 / 1px 50% no-repeat, linear-gradient(#8a8a8a, #8a8a8a) 73px 100% / 1px 30% no-repeat; }
.tree .l2 { padding-left: 65px; background: linear-gradient(#8a8a8a, #8a8a8a) 73px 0 / 1px 50% no-repeat, linear-gradient(#8a8a8a, #8a8a8a) 92px 100% / 1px 30% no-repeat; }
.tree .l3 { background: linear-gradient(#8a8a8a, #8a8a8a) 92px 0 / 1px 100% no-repeat; }
.tree .l3.root { background: linear-gradient(#8a8a8a, #8a8a8a) 92px 0 / 1px 100% no-repeat, linear-gradient(#8a8a8a, #8a8a8a) 54px 0 / 1px 100% no-repeat; }
.tree .l3.last { background-size: 1px 50%; }
.tree .l4 { padding-left: 103px; background: linear-gradient(#8a8a8a, #8a8a8a) 92px 0 / 1px 100% no-repeat, linear-gradient(#8a8a8a, #8a8a8a) 111px 0 / 1px 50% no-repeat; }
.tree svg { width: 24px; height: 24px; flex: none; margin: 0 10px 0 2px; }
.tree .name { background: #363636; padding-right: 2px; }
.tree .selected { background: #0a64ff; outline: 1px solid #3c86ff; }
.tree .current { text-decoration: underline; text-underline-offset: 3px; }
.box { width: 15px; height: 15px; flex: none; border: 1px solid #8a8a8a; border-radius: 2px; background: linear-gradient(#fff, #fff) center / 9px 1px no-repeat, #3a3a3a; }
.box.plus { background: linear-gradient(#fff, #fff) center / 9px 1px no-repeat, linear-gradient(#fff, #fff) center / 1px 11px no-repeat, #3a3a3a; }
.leaf { width: 9px; height: 1px; margin-left: 8px; margin-right: -2px; flex: none; background: #8a8a8a; }

/* ribbon */
.ribbon-tabs { position: absolute; left: 655px; bottom: 0; height: 23px; display: flex; gap: 8px; font-size: 11px; line-height: 14px; }
.tab-strip { display: flex; background: #e9eaea; border: 1px solid #fff; border-bottom: 1px solid #9a9a9a; border-radius: 3px 3px 0 0; }
.tab-strip button { padding: 0 20px 2px; white-space: nowrap; }
.tab-strip button:first-child { padding-left: 12px; padding-right: 16px; }
.tab-strip .on { padding-left: 22px; padding-right: 22px; background: #a0c8dd; }
.more svg { width: 16px; height: 12px; }
.ribbon { flex: none; height: 64px; position: relative; display: flex; overflow: hidden; background: #e1e3e3; border-top: 1px solid #fff; border-bottom: 1px solid #7c8790; font-size: 11px; line-height: 13px; color: #333; }
.edge { position: absolute; top: 0; bottom: 0; width: 26px; background: #f6f6f6; z-index: 1; }
.edge.left { left: 0; border-right: 1px solid #9a9a9a; }
.edge.right { right: 0; width: 23px; }
.edge svg { width: 12px; height: 18px; }
.item { flex: none; width: 79px; flex-direction: column; justify-content: flex-start; padding-top: 4px; gap: 4px; white-space: nowrap; }
.item svg, .item .fx { width: 28px; height: 28px; flex: none; }
.item small { font-size: 8px; }
.item.first span { padding-left: 14px; }
.item .fx { font: italic bold 28px/24px "Liberation Serif", serif; color: #222; }
.item.off { color: #777; }
.item.under { justify-content: flex-end; }
.item.gap { margin-left: 30px; }
.drop { flex: none; width: 12px; }
.drop::after { content: ""; border: 4px solid transparent; border-top: 5px solid #333; border-bottom: 0; }
.split { flex: none; display: flex; margin: 0 3px; border: 1px solid #5aa0bf; background: linear-gradient(#fafbfb, #e8eaea); }
.split .item { width: 74px; padding-top: 3px; }
.split .drop { width: 12px; border-left: 1px solid #444; }
.round { flex: none; width: 26px; height: 26px; margin: 18px 4px 0 7px; border: 1px solid #555; border-radius: 13px; background: #fff; }
.round svg { width: 12px; height: 12px; }
.sep { flex: none; width: 1px; height: 30px; margin: 16px 6px 0 0; background: #777; }
.sep.lone { margin-left: 19px; }

/* taskbar */
.taskbar { flex: none; height: 31px; display: flex; align-items: stretch; background: linear-gradient(90deg, #4f5e72 0, #5d6d84 4%, #6f85a0 20%, #7f9abb 40%, #8aa2c0 60%, #7c94b0 78%, #71889f 85%, #52647a 91%, #43536a 100%); border-top: 1px solid #a9bccf; }
.start { width: 59px; padding-right: 4px; }
.start svg { width: 38px; height: 38px; margin-top: -4px; flex: none; z-index: 1; position: relative; }
.app { width: 44px; margin-right: 2px; }
.app svg { width: 18px; height: 18px; }
.app.open { border: 1px solid #3c4c5e; border-radius: 3px; background: linear-gradient(135deg, #c5d4e2, #8299b5); box-shadow: inset 0 0 0 1px #d3dfea; }
.app.hot { background: linear-gradient(#f6d9c8, #d88a62); }
.app.lit { background: linear-gradient(135deg, #fff, #c5d6e6); }
.sq { width: 17px; height: 17px; font: bold 10px/15px "Noto Sans", sans-serif; border: 1px solid; text-align: center; }
.red { background: #c4171c; color: #fff; border-color: #8d0f12; }
.dark { background: #2a2726; color: #e0653a; border-color: #1c1918; }
.ai { background: #2b1400; color: #ff8a1f; }
.ae { background: #1f0a40; color: #c99bff; }
.lr { background: #04202b; color: #9fd8f0; }
.ps { background: #001d33; color: #3cc0ff; }
.id { background: #3a0018; color: #ff3f8e; }
.pr { background: #25003a; color: #e38cff; }
.tray { margin-left: auto; display: flex; align-items: center; gap: 8px; color: #fff; }
.tray svg { width: 16px; height: 16px; }
.tray time { margin: 0 8px 0 14px; font-size: 12px; }
.peek { width: 10px; align-self: stretch; border-left: 1px solid #23303f; background: #7c8b9c; }

/* floating dialogs */
.dialog { position: absolute; display: flex; flex-direction: column; padding: 0 6px 7px; border: 1px solid #1b222b; border-radius: 6px; box-shadow: inset 0 0 0 1px #cfdae6, 0 2px 14px 2px rgba(0, 0, 0, .6); }
.dlg-title { height: 28px; flex: none; display: flex; justify-content: space-between; align-items: flex-start; padding-left: 1px; font: 12px/26px "Noto Sans", sans-serif; color: #111; }
.dlg-title > span { text-shadow: 0 0 6px #fff, 0 0 8px #fff; }
.dlg-btns { display: flex; height: 18px; margin-right: -2px; border: 1px solid #aab4c0; border-top: 0; border-radius: 0 0 4px 4px; overflow: hidden; color: #fff; font: bold 13px/16px "Noto Sans", sans-serif; }
.dlg-btns button { width: 29px; border-right: 1px solid #aab4c0; }
.dlg-btns .close { width: 47px; border-right: 0; }
.dlg-btns svg { width: 11px; height: 11px; }
.dlg-body { flex: 1; min-height: 0; display: flex; flex-direction: column; background: #eee; border: 1px solid #28323d; }
.btn { height: 20px; border: 1px solid #a8a8a8; border-radius: 2px; background: linear-gradient(#f6f6f6, #e2e2e2); box-shadow: inset 0 0 0 1px #fbfbfb; font: 12px/16px "Open Sans", sans-serif; color: #111; }
.combo { position: relative; display: flex; height: 21px; }
.combo select { flex: 1; width: 100%; appearance: none; border: 1px solid #777; border-radius: 2px; background: linear-gradient(#f0f0f0, #d6d6d6); padding: 0 3px; opacity: 1; color: #111; }
.combo::after { content: ""; position: absolute; right: 4px; top: 9px; border: 4px solid transparent; border-top: 4px solid #111; border-bottom: 0; }
.combo.focus select { background: linear-gradient(#dff1fb, #8fc6e6); border-color: #2b628b; }
.combo.focus::before { content: ""; position: absolute; inset: 3px 14px 3px 3px; border: 1px dotted #333; }
.combo.off select { background: #efefef; border-color: #b5b5b5; color: #8a8a8a; }
.combo.off::after { border-top-color: #999; }
.flat { border: 0; border-top: 1px solid #ccc; background: #fff; padding: 0 3px; outline: 0; }

.params { left: 1096px; top: 319px; width: 324px; height: 518px; padding-left: 5px; background: linear-gradient(90deg, #b4b9bf 0, #99a2ab 20%, #4d5b68 55%, #4b5a69 75%, #79828c 100%) 0 0 / 100% 30px no-repeat, linear-gradient(#b9cde0 0, #c9dae9 27%, #7b93b3 29%, #5a7394 85%, #39485a 92%); }
.params .close { background: linear-gradient(#e59a8c 0, #d2503a 45%, #b82a14 50%, #d5563c 100%); }
.params .dlg-body { padding: 4px 9px 7px; }
.scroll-area { flex: none; display: grid; grid-template-columns: 276px 16px; grid-template-rows: 386px 15px; margin-bottom: 18px; }
.fields { overflow: hidden; display: flex; flex-direction: column; gap: 8px; padding-top: 6px; }
.row { display: flex; align-items: center; gap: 1px; width: 282px; flex: none; white-space: nowrap; }
.row .combo, .row .spin, .row .flat { flex: 1; min-width: 0; }
.row .flat { height: 20px; margin-left: 4px; }
.row .combo::after { right: 2px; }
.spin { display: flex; height: 20px; border: 1px solid #999; border-top: 2px solid #777; border-left: 2px solid #777; background: #fff; }
.spin input { flex: 1; width: 100%; height: 16px; border: 0; padding: 0 2px; background: none; outline: 0; }
.spin i { width: 16px; border-left: 1px solid #555; background: linear-gradient(#333, #333) 0 50% / 100% 1px no-repeat, #e6e6e6; position: relative; }
.spin i::before, .spin i::after { content: ""; position: absolute; left: 4px; border: 4px solid transparent; }
.spin i::before { top: 2px; border-bottom-color: #111; border-top: 0; }
.spin i::after { bottom: 2px; border-top-color: #111; border-bottom: 0; }
.bar-v { display: flex; flex-direction: column; align-items: center; background: #f0f0f0; padding: 11px 0 6px; }
.bar-v .knob { width: 15px; height: 243px; margin: 6px 0 auto; border: 1px solid #999; background: repeating-linear-gradient(#777 0 1px, transparent 1px 3px) center / 7px 8px no-repeat, linear-gradient(90deg, #f2f2f2, #cfcfcf); }
.bar-v i, .bar-h i { flex: none; }
.up, .down, .lt, .rt { border: 4px solid transparent; }
.up { border-bottom-color: #333; border-top: 0; }
.down { border-top-color: #333; border-bottom: 0; }
.lt { border-right-color: #333; border-left: 0; }
.rt { border-left-color: #333; border-right: 0; }
.bar-h { display: flex; align-items: center; padding: 0 7px 0 5px; margin-top: 1px; }
.bar-h .knob { width: 226px; height: 14px; margin: 0 auto 0 8px; border: 1px solid #999; background: repeating-linear-gradient(90deg, #777 0 1px, transparent 1px 3px) center / 8px 7px no-repeat, linear-gradient(#f2f2f2, #cfcfcf); }
.full { width: 100%; margin-bottom: 9px; }
.end { align-self: flex-end; width: 59px; }
.options { position: absolute; left: 169px; top: 288px; width: 131px; background: #fff; border: 1px solid #bbb; box-shadow: 2px 2px 2px rgba(0, 0, 0, .4); }
.options li { height: 16px; line-height: 15px; padding: 0 1px; }
.options .hit { background: #3399ff; color: #fff; }
.cursor { position: absolute; left: 210px; top: 316px; width: 13px; height: 21px; }

.insert { left: 1453px; top: 350px; width: 455px; height: 689px; padding-left: 5px; background: linear-gradient(90deg, #a4a9ae 0, #8e959b 16%, #545c65 32%, #5d6871 60%, #4a4e53 100%) 0 0 / 100% 29px no-repeat, linear-gradient(#5d6165 0, #55585c 91%, #dff1fb 93%, #cfe6f8 100%); font: 12px/16px "Noto Sans", sans-serif; }
.insert .dlg-body { padding: 9px 9px 8px; }
.form-grid { display: grid; grid-template-columns: 104px 1fr; row-gap: 1px; align-items: center; }
.form-grid label, .check { font-size: 11px; white-space: nowrap; }
.form-grid .combo { height: 23px; }
.form-grid > .flat { height: 19px; margin-right: 1px; }
.line { display: flex; align-items: center; }
.line .combo { flex: 1; }
.line .inside { flex: none; width: 76px; }
.combo.off select { font-size: 11px; }
.note { width: 28px; height: 28px; border: 1px solid; border-color: #fafafa #777 #777 #fafafa; }
.note svg { width: 23px; height: 23px; }
.dest { flex: 1; height: 20px; border: 1px solid #777; background: #f8f8f8; color: #888; padding: 0 3px; }
.table-box { height: 178px; margin: 2px 0 3px; padding: 2px 0 0 4px; background: #fff; border: 1px solid #777; }
table { width: 100%; border-collapse: separate; border-spacing: 0; table-layout: fixed; }
th { width: 150px; height: 23px; padding: 0 0 0 2px; text-align: left; font-weight: normal; border-right: 1px solid #ddd; border-bottom: 1px solid #ccc; background: linear-gradient(#fff, #f5f5f5); }
th + th { width: 145px; padding-left: 7px; }
th:last-child { width: auto; border-right: 0; }
td { height: 19px; padding: 0 0 0 2px; background: #3399ff; color: #fff; }
td + td { padding-left: 7px; }
td:last-child { background: none; }
.tools { gap: 3px; padding-left: 1px; margin-bottom: 3px; }
.tools .btn { font-size: 11px; }
.grow4 { flex: 200; }
.grow3 { flex: 157; }
.check { display: flex; align-items: center; gap: 4px; margin-right: 6px; }
.check input { appearance: none; width: 12px; height: 12px; border: 1px solid #666; background: #fff; }
.preview { flex: 1; min-height: 0; width: 100%; background: radial-gradient(#484848, #353535); border: 1px solid #fff; }
.preview text { font: 12px "Noto Sans", sans-serif; fill: #eee; }
.preview .teal { font-size: 14px; fill: #2cbcb0; }
.actions { justify-content: flex-end; gap: 8px; margin-top: 9px; }
.actions .btn { width: 70px; }
```
